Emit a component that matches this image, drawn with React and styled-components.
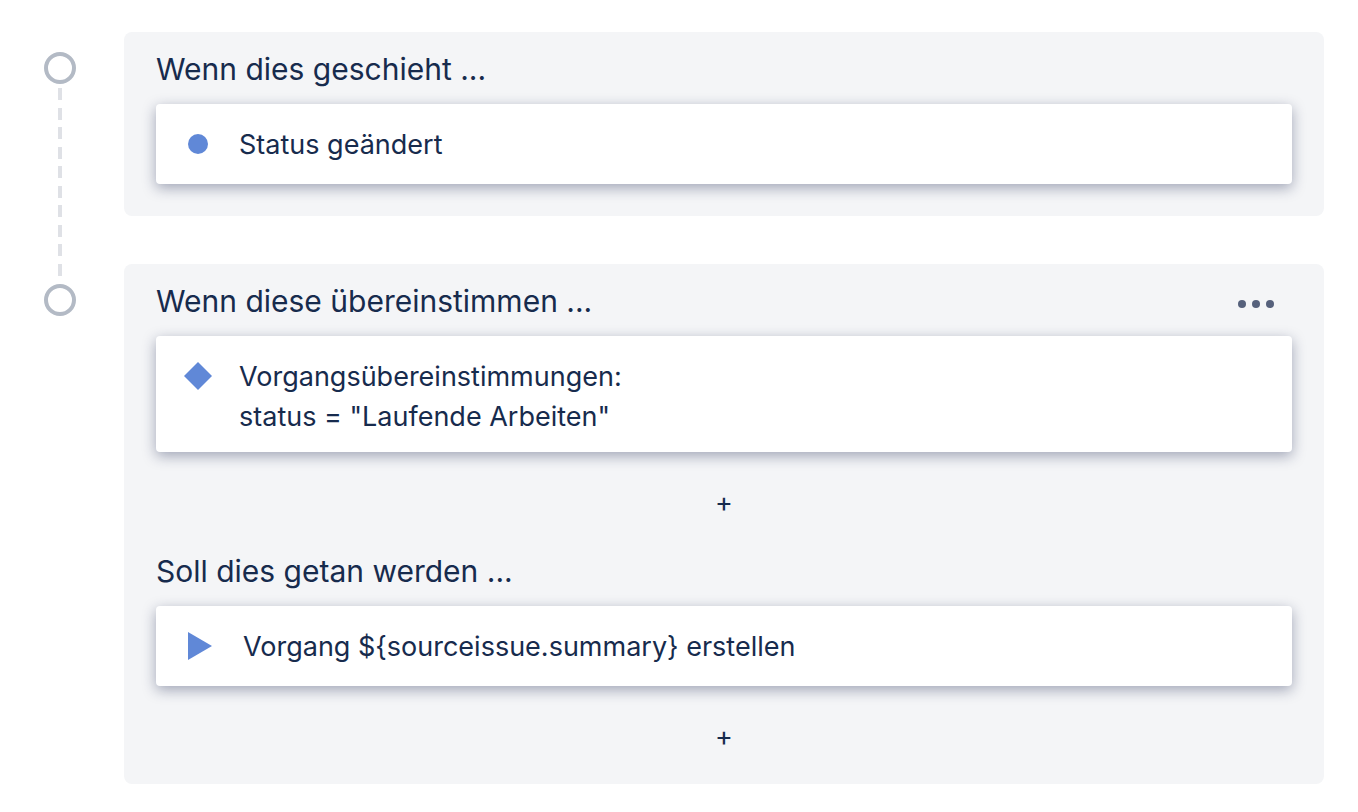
import styled, { createGlobalStyle } from "styled-components";

const GlobalStyle = createGlobalStyle`
  * {
    box-sizing: border-box;
  }

  body {
    margin: 0;
    background: #ffffff;
    color: #172b4d;
    font-family: Inter, "Liberation Sans", sans-serif;
  }
`;

const Rule = styled.main`
  padding: 32px 34px 28px 44px;
`;

const Step = styled.section`
  display: flex;
  gap: 48px;
`;

const Rail = styled.div`
  display: flex;
  flex-direction: column;
  align-items: center;
  flex: 0 0 32px;
  padding-top: 20px;
`;

const Marker = styled.span`
  width: 32px;
  height: 32px;
  border: 4px solid #b3bac5;
  border-radius: 50%;
`;

const Connector = styled.span`
  flex: 1;
  width: 4px;
  margin: 4px 0 -12px;
  background: repeating-linear-gradient(
    #dfe1e6 0 12px,
    transparent 12px calc((100% - 12px) / 9)
  );
`;

const Panel = styled.div`
  flex: 1;
  min-width: 0;
  margin-bottom: ${({ $last }) => ($last ? "0" : "48px")};
  padding: 16px 32px ${({ $last }) => ($last ? "0" : "32px")};
  border-radius: 8px;
  background: #f4f5f7;
`;

const Header = styled.div`
  display: flex;
  align-items: center;
  justify-content: space-between;
  height: 42px;
  margin-bottom: 14px;
`;

const Title = styled.h2`
  margin: 0;
  font-size: 30px;
  font-weight: 400;
  line-height: 42px;
`;

const MoreButton = styled.button`
  display: flex;
  padding: 18px 16px 12px;
  border: none;
  background: transparent;
  color: #56617c;
  cursor: pointer;
`;

const Card = styled.div`
  display: flex;
  gap: ${({ $wide }) => ($wide ? "31px" : "27px")};
  min-height: 80px;
  padding: 21px 28px 15px;
  border-radius: 4px;
  background: #ffffff;
  box-shadow: 0 4px 14px rgba(23, 35, 75, 0.38);
`;

const Icon = styled.svg`
  flex: none;
  width: 28px;
  height: 38px;
  fill: #6088d7;
`;

const Text = styled.p`
  margin: 0;
  font-size: 27px;
  line-height: 40px;
`;

const AddButton = styled.button`
  display: block;
  width: 64px;
  height: 64px;
  margin: 0 auto;
  padding: 0;
  border: none;
  background: transparent;
  color: #172b4d;
  font: 400 27px/64px Inter, "Liberation Sans", sans-serif;
  cursor: pointer;
`;

const AddRow = styled.div`
  padding: 19px 0 15px;
`;

export default function App() {
  return (
    <>
      <GlobalStyle />
      <Rule>
        <Step>
          <Rail>
            <Marker />
            <Connector />
          </Rail>
          <Panel>
            <Header>
              <Title>Wenn dies geschieht ...</Title>
            </Header>
            <Card>
              <Icon viewBox="0 0 28 38" aria-hidden="true">
                <circle cx="14" cy="19" r="10" />
              </Icon>
              <Text>Status geändert</Text>
            </Card>
          </Panel>
        </Step>
        <Step>
          <Rail>
            <Marker />
          </Rail>
          <Panel $last>
            <Header>
              <Title>Wenn diese übereinstimmen ...</Title>
              <MoreButton aria-label="Weitere Aktionen">
                <svg width="40" height="8" fill="currentColor" aria-hidden="true">
                  <circle cx="6" cy="4" r="4" />
                  <circle cx="20" cy="4" r="4" />
                  <circle cx="34" cy="4" r="4" />
                </svg>
              </MoreButton>
            </Header>
            <Card>
              <Icon viewBox="0 0 28 38" aria-hidden="true">
                <path d="M14 5 28 19 14 33 0 19Z" />
              </Icon>
              <Text>
                Vorgangsübereinstimmungen:
                <br />
                status = "Laufende Arbeiten"
              </Text>
            </Card>
            <AddRow>
              <AddButton aria-label="Bedingung hinzufügen">+</AddButton>
            </AddRow>
            <Header>
              <Title>Soll dies getan werden ...</Title>
            </Header>
            <Card $wide>
              <Icon viewBox="0 0 28 38" aria-hidden="true">
                <path d="M4 5 28 19 4 33Z" />
              </Icon>
              <Text>{"Vorgang ${sourceissue.summary} erstellen"}</Text>
            </Card>
            <AddRow>
              <AddButton aria-label="Aktion hinzufügen">+</AddButton>
            </AddRow>
          </Panel>
        </Step>
      </Rule>
    </>
  );
}
